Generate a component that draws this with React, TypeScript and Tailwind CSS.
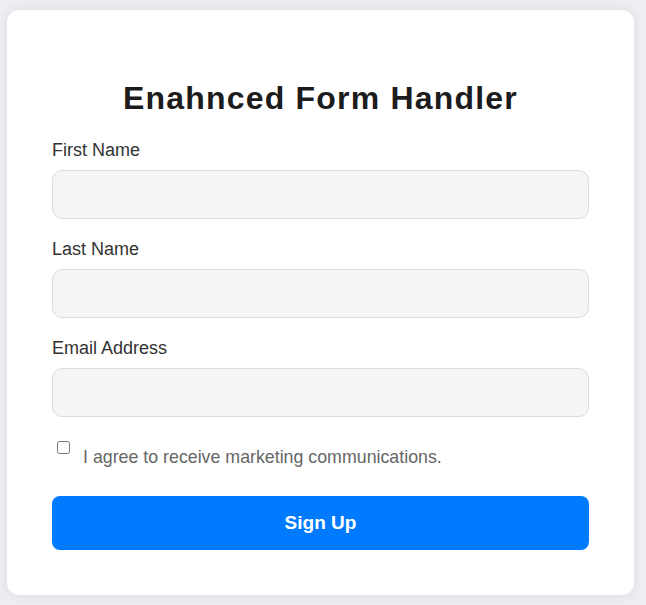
const fields = ["First Name", "Last Name", "Email Address"]

export default function App() {
  return (
    <div className="min-h-screen w-full bg-[#eceef1] pt-[10px] pl-[7px]" style={{ fontFamily: '"Liberation Sans", Arial, sans-serif' }}>
      <div className="w-[627px] rounded-[12px] bg-white px-[45px] pt-[70px] pb-[45px] shadow-[0_0_12px_rgba(0,0,0,0.08)]">
        <h1 className="text-center text-[32px] leading-[37px] font-bold tracking-[1.2px] text-[#1c1c1c]">
          Enahnced Form Handler
        </h1>
        <form className="mt-[23px] flex flex-col" onSubmit={(e) => e.preventDefault()}>
          {fields.map((f, i) => (
            <div key={f} className={i > 0 ? "mt-[20px]" : ""}>
              <label className="block text-[18px] leading-[20px] text-[#333]">{f}</label>
              <input
                type={f === "Email Address" ? "email" : "text"}
                className="mt-[10px] block h-[49px] w-full rounded-[10px] border border-[#dcdcdc] bg-[#f5f5f5] px-3 outline-none"
              />
            </div>
          ))}
          <div className="mt-[24px] flex items-start">
            <input type="checkbox" className="ml-[5px] mt-0 h-[13px] w-[13px]" />
            <span className="ml-[13px] mt-[6px] text-[17.8px] leading-[20px] text-[#666]">
              I agree to receive marketing communications.
            </span>
          </div>
          <button
            type="submit"
            className="mt-[29px] h-[54px] w-full rounded-[8px] bg-[#007bff] text-[19px] font-bold text-white"
          >
            Sign Up
          </button>
        </form>
      </div>
    </div>
  )
}
